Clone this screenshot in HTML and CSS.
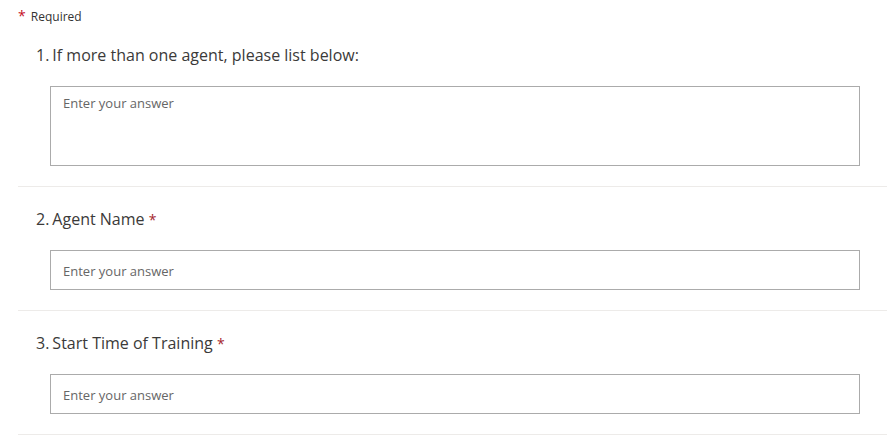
FILE: index.html
```html
<!DOCTYPE html>
<html>
<head>
<meta charset="utf-8">
<link rel="stylesheet" href="styles.css">
</head>
<body>
<div class="form">
  <div class="required-note"><span class="star">*</span> Required</div>
  <div class="question first">
    <div class="q-title"><span class="q-num">1.</span>If more than one agent, please list below:</div>
    <textarea class="answer area" placeholder="Enter your answer"></textarea>
  </div>
  <div class="question">
    <div class="q-title"><span class="q-num">2.</span>Agent Name <span class="req">*</span></div>
    <input class="answer line" type="text" placeholder="Enter your answer">
  </div>
  <div class="question">
    <div class="q-title"><span class="q-num">3.</span>Start Time of Training <span class="req">*</span></div>
    <input class="answer line" type="text" placeholder="Enter your answer">
  </div>
</div>
</body>
</html>
```

FILE: styles.css
```css
html, body {
  margin: 0;
  padding: 0;
  background: #ffffff;
  font-family: "Open Sans", "Noto Sans", sans-serif;
  color: #333333;
  overflow: hidden;
}
.form {
  margin-left: 18px;
  width: 880px;
}
.required-note {
  height: 16px;
  margin-top: 8px;
  font-size: 12px;
  line-height: 16px;
  color: #333333;
}
.required-note .star {
  color: #c50f1f;
  font-size: 14px;
  margin-right: 2px;
}
.question {
  display: flex;
  flex-direction: column;
  padding: 21px 0 20px 18px;
  border-bottom: 1px solid #edebe9;
}
.question.first {
  padding-top: 20px;
}
.q-title {
  font-size: 16px;
  line-height: 22px;
  height: 22px;
  color: #3b3a39;
}
.q-num {
  margin-right: 3px;
}
.req {
  color: #a4262c;
  font-size: 14px;
}
.answer {
  box-sizing: border-box;
  margin: 20px 0 0 14px;
  width: 810px;
  border: 1px solid #ababab;
  border-radius: 0;
  font-family: inherit;
  font-size: 13px;
  color: #333333;
  background: #ffffff;
  outline: none;
  padding: 0 12px;
}
.answer::placeholder {
  color: #666666;
  opacity: 1;
}
.area {
  height: 80px;
  padding-top: 7px;
  resize: none;
  line-height: 18px;
}
.line {
  height: 40px;
  padding-top: 2px;
  line-height: 36px;
}
```
